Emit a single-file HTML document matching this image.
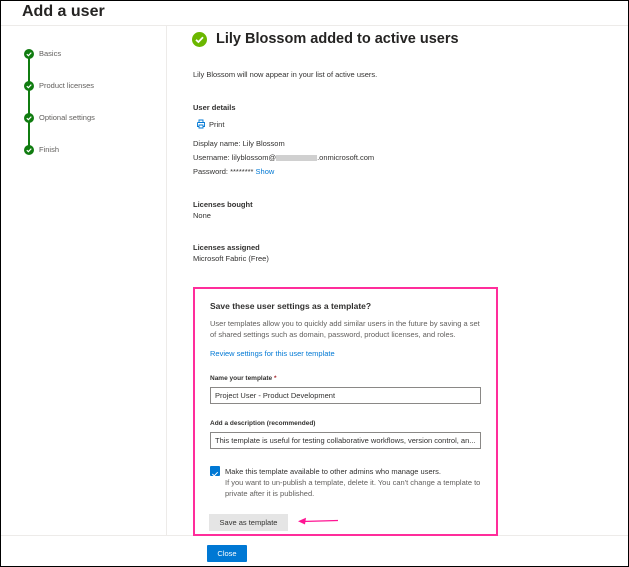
<!DOCTYPE html>
<html><head><style>
*{margin:0;padding:0;box-sizing:border-box}
body{width:629px;height:567px;position:relative;overflow:hidden;background:#fff;font-family:"Liberation Sans",sans-serif;color:#323130}
.a{position:absolute;white-space:nowrap}
.s{font-size:7.5px}
.b{font-weight:bold}
.ck{position:absolute;width:10px;height:10px;border-radius:50%;background:#107c10}
.ck svg{position:absolute;left:0;top:0}
</style></head><body>
<div class="a" style="left:0;top:0;width:629px;height:567px;border:1.5px solid #000;z-index:5;pointer-events:none"></div>
<div class="a b" style="left:22px;top:3px;font-size:16px;color:#252423">Add a user</div>
<div class="a" style="left:1px;top:25px;width:627px;height:1px;background:#edebe9"></div>
<div class="a" style="left:166px;top:26px;width:1px;height:509px;background:#edebe9"></div>
<div class="a" style="left:1px;top:535px;width:627px;height:1px;background:#edebe9"></div>
<div class="a" style="left:28px;top:54px;width:1.5px;height:96px;background:#107c10"></div>
<div class="ck" style="left:24px;top:49px"><svg width="10" height="10"><path d="M2.8 5.2 L4.4 6.7 L7.3 3.6" stroke="#fff" stroke-width="1.2" fill="none"/></svg></div>
<div class="ck" style="left:24px;top:81px"><svg width="10" height="10"><path d="M2.8 5.2 L4.4 6.7 L7.3 3.6" stroke="#fff" stroke-width="1.2" fill="none"/></svg></div>
<div class="ck" style="left:24px;top:113px"><svg width="10" height="10"><path d="M2.8 5.2 L4.4 6.7 L7.3 3.6" stroke="#fff" stroke-width="1.2" fill="none"/></svg></div>
<div class="ck" style="left:24px;top:145px"><svg width="10" height="10"><path d="M2.8 5.2 L4.4 6.7 L7.3 3.6" stroke="#fff" stroke-width="1.2" fill="none"/></svg></div>
<div class="a s" style="left:39px;top:49px;color:#605e5c">Basics</div>
<div class="a s" style="left:39px;top:81px;color:#605e5c">Product licenses</div>
<div class="a s" style="left:39px;top:113px;color:#605e5c">Optional settings</div>
<div class="a s" style="left:39px;top:145px;color:#605e5c">Finish</div>
<div class="a" style="left:192px;top:32px;width:15px;height:15px;border-radius:50%;background:#6bb700"><svg width="15" height="15"><path d="M4 7.8 L6.4 10 L11 5.3" stroke="#fff" stroke-width="1.8" fill="none"/></svg></div>
<div class="a b" style="left:216px;top:31px;font-size:14.5px;color:#252423">Lily Blossom added to active users</div>
<div class="a s" style="left:193px;top:70px">Lily Blossom will now appear in your list of active users.</div>
<div class="a s b" style="left:193px;top:103px">User details</div>
<svg class="a" style="left:196px;top:119px" width="10" height="10"><path d="M3 3.5V1h4v2.5M1.5 3.5h7v4h-1.5M3 7.5H1.5v-4M3 6h4v3H3z" stroke="#0078d4" stroke-width="0.9" fill="none"/></svg>
<div class="a s" style="left:209px;top:120px">Print</div>
<div class="a s" style="left:193px;top:139px">Display name: Lily Blossom</div>
<div class="a s" style="left:193px;top:153px">Username: lilyblossom@<span style="display:inline-block;width:41px;height:6px;background:#d0d0d0;vertical-align:middle"></span>.onmicrosoft.com</div>
<div class="a s" style="left:193px;top:167px">Password: ******** <span style="color:#0078d4">Show</span></div>
<div class="a s b" style="left:193px;top:200px">Licenses bought</div>
<div class="a s" style="left:193px;top:211px">None</div>
<div class="a s b" style="left:193px;top:243px">Licenses assigned</div>
<div class="a s" style="left:193px;top:254px">Microsoft Fabric (Free)</div>
<div class="a" style="left:193px;top:287px;width:305px;height:249px;background:#ff2d9b"></div>
<div class="a" style="left:195px;top:289px;width:301px;height:245px;background:#fff"></div>
<div class="a b" style="left:210px;top:301px;font-size:8.5px">Save these user settings as a template?</div>
<div class="a s" style="left:210px;top:318px;color:#605e5c;line-height:11px">User templates allow you to quickly add similar users in the future by saving a set<br>of shared settings such as domain, password, product licenses, and roles.</div>
<div class="a s" style="left:210px;top:349px;color:#0078d4">Review settings for this user template</div>
<div class="a b" style="left:210px;top:375px;font-size:6.5px">Name your template <span style="color:#a4262c">*</span></div>
<div class="a s" style="left:210px;top:387px;width:271px;height:17px;border:1px solid #8a8886;padding:3px 4px;color:#323130">Project User - Product Development</div>
<div class="a b" style="left:210px;top:420px;font-size:6.5px">Add a description (recommended)</div>
<div class="a s" style="left:210px;top:432px;width:271px;height:17px;border:1px solid #8a8886;padding:3px 4px">This template is useful for testing collaborative workflows, version control, an...</div>
<div class="a" style="left:210px;top:466px;width:10px;height:10px;background:#0078d4;border-radius:1px"><svg width="10" height="10"><path d="M2.3 5 L4.2 6.8 L7.7 3.2" stroke="#fff" stroke-width="1" fill="none"/></svg></div>
<div class="a s" style="left:225px;top:466px;line-height:11px;color:#323130">Make this template available to other admins who manage users.<br><span style="color:#605e5c">If you want to un-publish a template, delete it. You can't change a template to<br>private after it is published.</span></div>
<div class="a s" style="left:209px;top:514px;width:79px;height:17px;background:#e5e5e5;text-align:center;line-height:17px">Save as template</div>
<svg class="a" style="left:296px;top:516px" width="44" height="10"><path d="M42 4.5 L6 5.5" stroke="#ff1493" stroke-width="1.3"/><path d="M2 5.3 L10 1.8 L9 8.5 Z" fill="#ff1493"/></svg>
<div class="a s" style="left:207px;top:545px;width:40px;height:17px;background:#0078d4;color:#fff;text-align:center;line-height:17px;border-radius:1px">Close</div>
</body></html>
